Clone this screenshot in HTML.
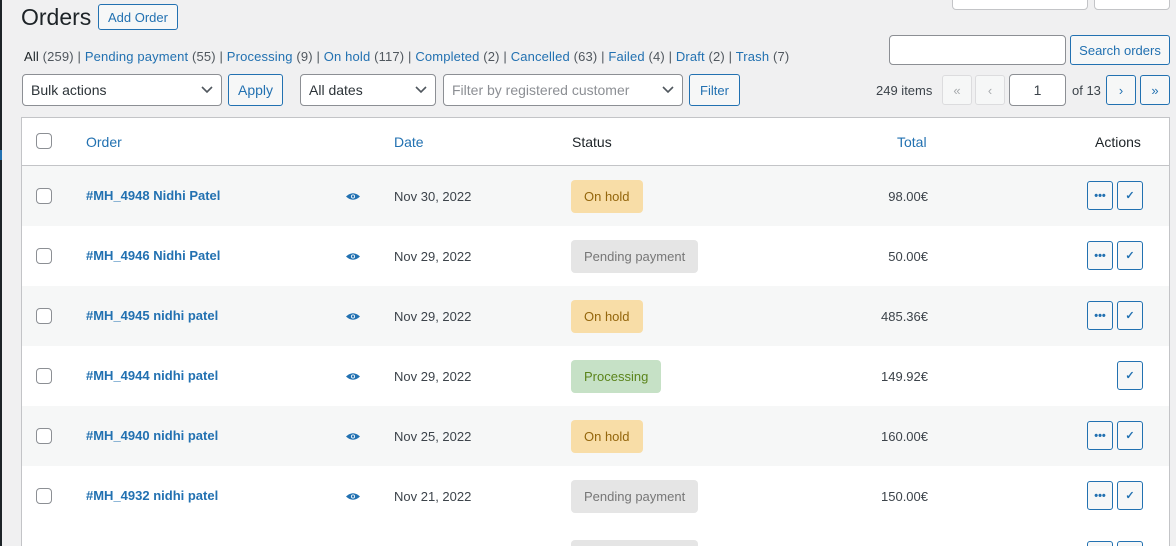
<!DOCTYPE html>
<html style="width:1176px;height:546px;overflow:hidden"><head><meta charset="utf-8"><style>
*{box-sizing:border-box}
body{margin:0;width:1176px;height:546px;overflow:hidden;background:#f0f0f1;font-family:"Liberation Sans",sans-serif;font-size:13px;color:#3c434a;position:relative}
.abs{position:absolute}
.btn{position:absolute;border:1px solid #2271b1;color:#2271b1;background:#f6f7f7;border-radius:3px;font-size:13px;display:flex;align-items:center;justify-content:center}
.sel{position:absolute;border:1px solid #8c8f94;background:#fff;border-radius:4px;font-size:14px;color:#2c3338;display:flex;align-items:center;padding-left:8px}
.sel svg{position:absolute;right:8px;top:50%;margin-top:-4px}
a{color:#2271b1;text-decoration:none}
.table{position:absolute;left:21px;top:117px;width:1149px;height:429px;border:1px solid #c3c4c7;border-bottom:none;background:#fff;overflow:hidden}
.hd{position:absolute;left:0;top:0;width:100%;height:48px;border-bottom:1px solid #c3c4c7;font-size:14px}
.row{position:absolute;left:0;width:100%;height:60px;font-size:13px}
.cb{position:absolute;left:14px;width:16px;height:16px;border:1px solid #8c8f94;border-radius:4px;background:#fff}
.pill{position:absolute;left:549px;height:33px;border-radius:4px;padding:0 13px;display:flex;align-items:center;font-size:13px}
.hold{background:#f8dda7;color:#94660c}
.pend{background:#e5e5e5;color:#777}
.proc{background:#c6e1c6;color:#5b841b}
.ab{position:absolute;width:26px;height:29px;border:1px solid #2271b1;border-radius:3px;background:#f6f7f7;color:#2271b1;display:flex;align-items:center;justify-content:center;font-size:11px;font-weight:bold}
</style></head><body>
<div class="abs" style="left:0;top:0;width:2px;height:546px;background:#1d2327"></div>
<div class="abs" style="left:0;top:150px;width:2px;height:10px;background:#2271b1"></div>
<div class="abs" style="left:21px;top:4px;font-size:23px;color:#1d2327">Orders</div>
<div class="btn" style="left:98px;top:4px;width:80px;height:26px">Add Order</div>
<div class="abs" style="left:952px;top:-4px;width:136px;height:14px;background:#fff;border:1px solid #c3c4c7;border-radius:4px"></div>
<div class="abs" style="left:1094px;top:-4px;width:76px;height:14px;background:#fff;border:1px solid #c3c4c7;border-radius:4px"></div>
<div class="abs" style="left:24px;top:49px;font-size:13px;color:#50575e;letter-spacing:0.15px;white-space:nowrap"><span style="color:#1d2327">All</span> (259) | <a>Pending payment</a> (55) | <a>Processing</a> (9) | <a>On hold</a> (117) | <a>Completed</a> (2) | <a>Cancelled</a> (63) | <a>Failed</a> (4) | <a>Draft</a> (2) | <a>Trash</a> (7)</div>
<div class="abs" style="left:889px;top:35px;width:177px;height:30px;background:#fff;border:1px solid #8c8f94;border-radius:4px"></div>
<div class="btn" style="left:1070px;top:35px;width:100px;height:30px">Search orders</div>
<div class="sel" style="left:22px;top:74px;width:200px;height:32px">Bulk actions<svg width="12" height="8"><path d="M1 1l5 5 5-5" stroke="#50575e" stroke-width="1.6" fill="none"/></svg></div>
<div class="btn" style="left:228px;top:74px;width:55px;height:32px;font-size:14px">Apply</div>
<div class="sel" style="left:300px;top:74px;width:136px;height:32px">All dates<svg width="12" height="8"><path d="M1 1l5 5 5-5" stroke="#50575e" stroke-width="1.6" fill="none"/></svg></div>
<div class="sel" style="left:443px;top:74px;width:240px;height:32px;color:#8c8f94">Filter by registered customer<svg width="12" height="8"><path d="M1 1l5 5 5-5" stroke="#50575e" stroke-width="1.6" fill="none"/></svg></div>
<div class="btn" style="left:689px;top:74px;width:51px;height:32px">Filter</div>
<div class="abs" style="left:876px;top:83px;font-size:13px">249 items</div>
<div class="btn" style="left:942px;top:75px;width:30px;height:30px;border-color:#dcdcde;color:#a7aaad">«</div>
<div class="btn" style="left:975px;top:75px;width:30px;height:30px;border-color:#dcdcde;color:#a7aaad">‹</div>
<div class="abs" style="left:1009px;top:74px;width:57px;height:32px;background:#fff;border:1px solid #8c8f94;border-radius:4px;text-align:center;line-height:30px;font-size:14px">1</div>
<div class="abs" style="left:1072px;top:83px;font-size:13px">of 13</div>
<div class="btn" style="left:1106px;top:75px;width:30px;height:30px">›</div>
<div class="btn" style="left:1140px;top:75px;width:30px;height:30px">»</div>
<div class="table">
<div class="hd">
<div class="cb" style="top:15px"></div>
<a class="abs" style="left:64px;top:16px">Order</a>
<a class="abs" style="left:372px;top:16px">Date</a>
<div class="abs" style="left:550px;top:16px;color:#1d2327">Status</div>
<a class="abs" style="left:875px;top:16px">Total</a>
<div class="abs" style="left:1073px;top:16px;color:#1d2327">Actions</div>
</div>
<div id="rows"></div>
</div>
<script>
var d=[["4948","Nidhi Patel","Nov 30, 2022","hold","On hold","98.00€",1],
["4946","Nidhi Patel","Nov 29, 2022","pend","Pending payment","50.00€",1],
["4945","nidhi patel","Nov 29, 2022","hold","On hold","485.36€",1],
["4944","nidhi patel","Nov 29, 2022","proc","Processing","149.92€",0],
["4940","nidhi patel","Nov 25, 2022","hold","On hold","160.00€",1],
["4932","nidhi patel","Nov 21, 2022","pend","Pending payment","150.00€",1],
["4930","nidhi patel","Nov 21, 2022","pend","Pending payment","150.00€",1]];
var h="";d.forEach(function(r,i){var t=48+i*60;
h+='<div class="row" style="top:'+t+'px;background:'+(i%2==0&&i<6?'#f6f7f7':'#fff')+'">'+
'<div class="cb" style="top:22px"></div>'+
'<a class="abs" style="left:64px;top:22px;font-weight:bold">#MH_'+r[0]+' '+r[1]+'</a>'+
'<svg class="abs" style="left:324px;top:26px" width="14" height="9"><path d="M0 4.5Q7-2 14 4.5Q7 11 0 4.5Z" fill="#2271b1"/><circle cx="7" cy="4.5" r="2" fill="#fff"/><circle cx="7" cy="4.5" r="1.2" fill="#2271b1"/></svg>'+
'<div class="abs" style="left:372px;top:23px">'+r[2]+'</div>'+
'<div class="pill '+r[3]+'" style="top:14px">'+r[4]+'</div>'+
'<div class="abs" style="right:241px;top:23px">'+r[5]+'</div>'+
(r[6]?'<div class="ab" style="left:1065px;top:15px">•••</div>':'')+
'<div class="ab" style="left:1095px;top:15px">✓</div></div>';});
document.getElementById("rows").innerHTML=h;
</script>
</body></html>
